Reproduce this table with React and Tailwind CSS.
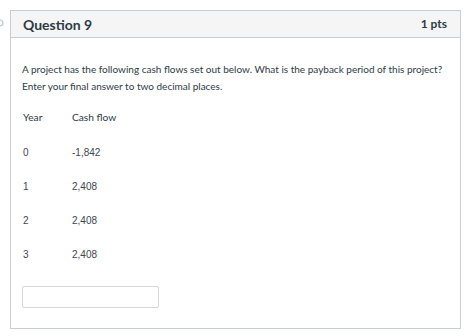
export default function App() {
  const rows = [
    ["0", "-1,842"],
    ["1", "2,408"],
    ["2", "2,408"],
    ["3", "2,408"],
  ];
  return (
    <div className="relative w-[474px] h-[336px] bg-white font-['Lato','Liberation_Sans',sans-serif] text-[#2d3b45]">
      {/* question status marker, mostly hidden at the left edge */}
      <svg className="absolute left-[-4px] top-[19px]" width="8" height="8" viewBox="0 0 8 8">
        <circle cx="4" cy="4" r="3" fill="none" stroke="#b8c4cc" strokeWidth="1.2" />
      </svg>
      <div className="pt-[10px] pl-[10px]">
        <div className="w-[451px] h-[319px] border border-[#c7cdd1] flex flex-col">
          <div className="h-[27px] shrink-0 bg-[#f5f5f5] border-b border-[#c7cdd1] flex items-center justify-between pl-[12px] pr-[13px]">
            <span className="text-[14px] font-bold">Question 9</span>
            <span className="text-[12px] font-bold">1 pts</span>
          </div>
          <div className="pl-[11px] pt-[23px]">
            <p className="text-[10px] leading-[17px] w-[430px]">
              A project has the following cash flows set out below. What is the payback period of this project? Enter your final answer to two decimal places.
            </p>
            <div className="mt-[6px] text-[10.2px]">
              <div className="flex h-[34px] items-center">
                <span className="w-[50px] pl-[1px]">Year</span>
                <span>Cash flow</span>
              </div>
              {rows.map(([y, c]) => (
                <div key={y} className="flex h-[34px] items-center font-['Liberation_Sans',sans-serif] text-[10px] text-[#3b4650]">
                  <span className="w-[50px] pl-[1px]">{y}</span>
                  <span>{c}</span>
                </div>
              ))}
            </div>
            <div className="mt-[15px] w-[137px] h-[22px] border border-[#d5d9dc] rounded-[2px]" />
          </div>
        </div>
      </div>
    </div>
  );
}
